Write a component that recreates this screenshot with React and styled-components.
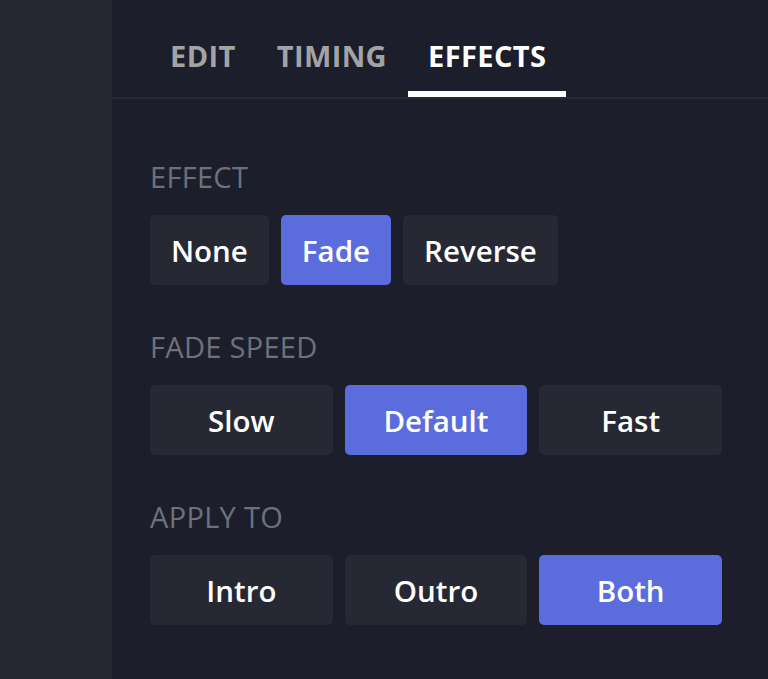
import React, { useState } from "react";
import styled, { createGlobalStyle } from "styled-components";

const Global = createGlobalStyle`
  html, body { margin: 0; padding: 0; background: #1c1f2b; }
  body { font-family: "Open Sans", "Noto Sans", sans-serif; }
  * { box-sizing: border-box; }
`;

const Shell = styled.div`
  display: flex;
  width: 768px;
  height: 679px;
  overflow: hidden;
`;

const Sidebar = styled.aside`
  flex: 0 0 112px;
  background: #262833;
`;

const Panel = styled.main`
  flex: 1;
  background: #1c1f2b;
  display: flex;
  flex-direction: column;
`;

const TabBar = styled.nav`
  display: flex;
  gap: 1px;
  padding: 38px 0 0 38px;
  border-bottom: 2px solid #262833;
`;

const Tab = styled.button`
  appearance: none;
  background: none;
  border: none;
  padding: 0 20px 17px;
  margin: 0;
  font-family: inherit;
  font-size: 29px;
  font-weight: 700;
  letter-spacing: 0.4px;
  line-height: 36px;
  color: ${(p) => (p.$active ? "#ffffff" : "#a3a3a5")};
  border-bottom: 6px solid ${(p) => (p.$active ? "#ffffff" : "transparent")};
  cursor: pointer;
`;

const Content = styled.div`
  padding: 58px 0 0 38px;
  display: flex;
  flex-direction: column;
  gap: 42px;
  width: 610px;
`;

const Section = styled.section`
  display: flex;
  flex-direction: column;
  gap: 18px;
`;

const Label = styled.h3`
  margin: 0;
  font-size: 29px;
  font-weight: 400;
  line-height: 40px;
  letter-spacing: 0.3px;
  color: #6e717c;
`;

const Row = styled.div`
  display: ${(p) => (p.$grid ? "grid" : "flex")};
  grid-template-columns: repeat(3, 1fr);
  gap: 12px;
`;

const Choice = styled.button`
  appearance: none;
  border: none;
  height: 70px;
  padding: 0 21px;
  border-radius: 5px;
  font-family: inherit;
  font-size: 29.5px;
  font-weight: 550;
  color: #ffffff;
  background: ${(p) => (p.$active ? "#5b6ddc" : "#262833")};
  cursor: pointer;
`;

function Group({ label, options, value, onChange, grid }) {
  return (
    <Section>
      <Label>{label}</Label>
      <Row $grid={grid}>
        {options.map((o) => (
          <Choice key={o} $active={o === value} onClick={() => onChange(o)}>
            {o}
          </Choice>
        ))}
      </Row>
    </Section>
  );
}

export default function App() {
  const [tab, setTab] = useState("EFFECTS");
  const [effect, setEffect] = useState("Fade");
  const [speed, setSpeed] = useState("Default");
  const [apply, setApply] = useState("Both");

  return (
    <>
      <Global />
      <Shell>
        <Sidebar />
        <Panel>
          <TabBar>
            {["EDIT", "TIMING", "EFFECTS"].map((t) => (
              <Tab key={t} $active={t === tab} onClick={() => setTab(t)}>
                {t}
              </Tab>
            ))}
          </TabBar>
          <Content>
            <Group
              label="EFFECT"
              options={["None", "Fade", "Reverse"]}
              value={effect}
              onChange={setEffect}
            />
            <Group
              label="FADE SPEED"
              options={["Slow", "Default", "Fast"]}
              value={speed}
              onChange={setSpeed}
              grid
            />
            <Group
              label="APPLY TO"
              options={["Intro", "Outro", "Both"]}
              value={apply}
              onChange={setApply}
              grid
            />
          </Content>
        </Panel>
      </Shell>
    </>
  );
}
